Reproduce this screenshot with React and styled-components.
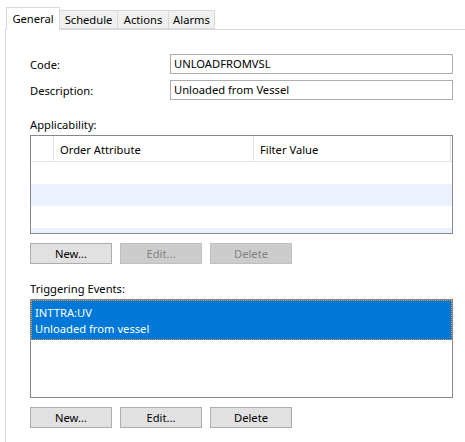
import React from "react";
import styled, { createGlobalStyle } from "styled-components";

const Global = createGlobalStyle`
  html, body { margin: 0; padding: 0; background: #ffffff; }
  body { font-family: "Noto Sans", "Liberation Sans", sans-serif; font-size: 11.2px; color: #000; }
  * { box-sizing: border-box; }
`;

const Window = styled.div`
  width: 465px;
  height: 442px;
  overflow: hidden;
  padding: 7px 0 0 5px;
  background: #fff;
`;

const TabStrip = styled.div`
  display: flex;
  align-items: flex-end;
  height: 22px;
  padding-left: 1px;
  position: relative;
  z-index: 1;
`;

const Tab = styled.div`
  height: ${(p) => (p.$active ? "23px" : "19px")};
  margin-bottom: ${(p) => (p.$active ? "-1px" : "0")};
  width: ${(p) => p.$w}px;
  border: 1px solid #d9d9d9;
  border-bottom: ${(p) => (p.$active ? "none" : "1px solid #d9d9d9")};
  border-left: ${(p) => (p.$first || p.$active ? "1px solid #d9d9d9" : "none")};
  background: ${(p) => (p.$active ? "#ffffff" : "#f0f0f0")};
  display: flex;
  align-items: ${(p) => (p.$active ? "flex-start" : "center")};
  padding-top: ${(p) => (p.$active ? "3px" : "1px")};
  justify-content: center;
  line-height: 16px;
  white-space: nowrap;
`;

const Panel = styled.div`
  border-top: 1px solid #d9d9d9;
  border-left: 1px solid #d9d9d9;
  height: 420px;
  padding: 24px 0 0 24px;
`;

const FormGrid = styled.div`
  display: grid;
  grid-template-columns: 140px 283px;
  row-gap: 6px;
  align-items: center;
`;

const Label = styled.div`
  line-height: 16px;
  padding-top: 1px;
  white-space: nowrap;
`;

const TextBox = styled.div`
  height: 20px;
  border: 1px solid #adadad;
  background: #fff;
  padding: 0 3px;
  line-height: 18px;
  white-space: nowrap;
  overflow: hidden;
`;

const SectionLabel = styled.div`
  margin-top: 17px;
  margin-bottom: 2px;
  line-height: 16px;
`;

const ListBox = styled.div`
  width: 423px;
  height: 99px;
  border: 1px solid #828790;
  background: #fff;
  overflow: hidden;
`;

const Header = styled.div`
  display: grid;
  grid-template-columns: 23px 200px 1fr;
  height: 26px;
  border-bottom: 1px solid #e5e5e5;
`;

const HeaderCell = styled.div`
  border-right: 1px solid #e5e5e5;
  padding: 3px 0 0 6px;
  display: flex;
  align-items: center;
  line-height: 16px;
  &:last-child { margin-right: 1px; }
`;

const Row = styled.div`
  height: 22px;
  background: ${(p) => (p.$alt ? "#ebf2fd" : "#ffffff")};
`;

const SelectedItem = styled.div`
  height: 40px;
  background: #0078d7;
  color: #fff;
  border: 1px dotted #f0943a;
  padding: 4px 3px;
  line-height: 16px;
`;

const ButtonRow = styled.div`
  display: flex;
  gap: 8px;
  margin-top: 9px;
`;

const Button = styled.div`
  width: 82px;
  height: 21px;
  border: 1px solid ${(p) => (p.$disabled ? "#bfbfbf" : "#adadad")};
  background: ${(p) => (p.$disabled ? "#cccccc" : "#e1e1e1")};
  color: ${(p) => (p.$disabled ? "#838383" : "#000")};
  display: flex;
  align-items: center;
  justify-content: center;
  line-height: 16px;
  padding-top: 1px;
`;

export default function App() {
  return (
    <>
      <Global />
      <Window>
        <TabStrip>
          <Tab $active $first $w={54}>General</Tab>
          <Tab $w={58}>Schedule</Tab>
          <Tab $w={51}>Actions</Tab>
          <Tab $w={46}>Alarms</Tab>
        </TabStrip>
        <Panel>
          <FormGrid>
            <Label>Code:</Label>
            <TextBox>UNLOADFROMVSL</TextBox>
            <Label>Description:</Label>
            <TextBox>Unloaded from Vessel</TextBox>
          </FormGrid>

          <SectionLabel>Applicability:</SectionLabel>
          <ListBox>
            <Header>
              <HeaderCell />
              <HeaderCell>Order Attribute</HeaderCell>
              <HeaderCell>Filter Value</HeaderCell>
            </Header>
            <Row />
            <Row $alt />
            <Row />
            <Row $alt />
          </ListBox>
          <ButtonRow>
            <Button>New...</Button>
            <Button $disabled>Edit...</Button>
            <Button $disabled>Delete</Button>
          </ButtonRow>

          <SectionLabel>Triggering Events:</SectionLabel>
          <ListBox>
            <SelectedItem>
              INTTRA:UV
              <br />
              Unloaded from vessel
            </SelectedItem>
          </ListBox>
          <ButtonRow>
            <Button>New...</Button>
            <Button>Edit...</Button>
            <Button>Delete</Button>
          </ButtonRow>
        </Panel>
      </Window>
    </>
  );
}
